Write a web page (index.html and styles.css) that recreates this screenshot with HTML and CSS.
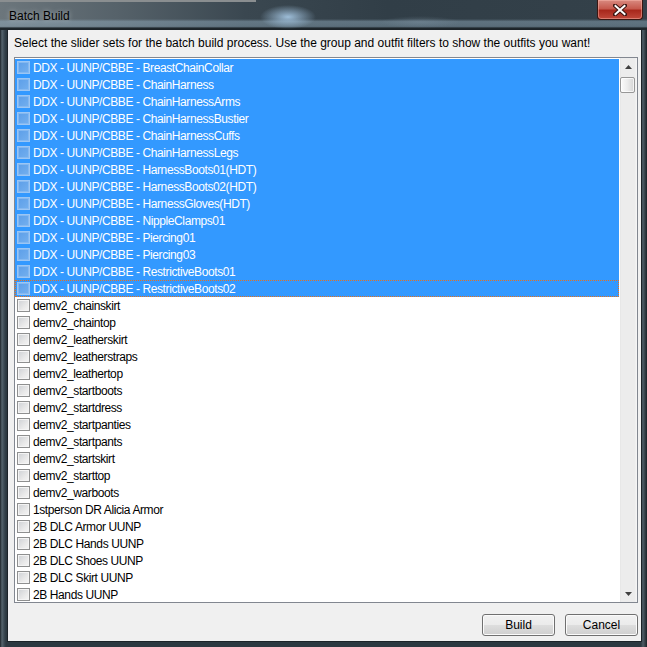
FILE: index.html
```html
<!DOCTYPE html>
<html lang="en">
<head>
    <meta charset="UTF-8">
    <title>Batch Build</title>
    <link rel="stylesheet" href="styles.css">
</head>
<body>

    <div class="window">

        <!-- Glass title bar -->
        <div class="titlebar">
            <span class="title">Batch Build</span>
            <div class="close">
                <svg width="14" height="12" viewBox="0 0 14 12">
                    <path d="M2 1.5 L12 10.5 M12 1.5 L2 10.5" stroke="#3a1410" stroke-width="4" stroke-linecap="square"/>
                    <path d="M2.5 2 L11.5 10 M11.5 2 L2.5 10" stroke="#ffffff" stroke-width="2" stroke-linecap="square"/>
                </svg>
            </div>
        </div>

        <div class="client">
            <div class="prompt">Select the slider sets for the batch build process. Use the group and outfit filters to show the outfits you want!</div>

            <!-- Outfit list -->
            <div class="list">
                <div class="items">
                    <div class="row sel"><span class="check"></span>DDX - UUNP/CBBE - BreastChainCollar</div>
                    <div class="row sel"><span class="check"></span>DDX - UUNP/CBBE - ChainHarness</div>
                    <div class="row sel"><span class="check"></span>DDX - UUNP/CBBE - ChainHarnessArms</div>
                    <div class="row sel"><span class="check"></span>DDX - UUNP/CBBE - ChainHarnessBustier</div>
                    <div class="row sel"><span class="check"></span>DDX - UUNP/CBBE - ChainHarnessCuffs</div>
                    <div class="row sel"><span class="check"></span>DDX - UUNP/CBBE - ChainHarnessLegs</div>
                    <div class="row sel"><span class="check"></span>DDX - UUNP/CBBE - HarnessBoots01(HDT)</div>
                    <div class="row sel"><span class="check"></span>DDX - UUNP/CBBE - HarnessBoots02(HDT)</div>
                    <div class="row sel"><span class="check"></span>DDX - UUNP/CBBE - HarnessGloves(HDT)</div>
                    <div class="row sel"><span class="check"></span>DDX - UUNP/CBBE - NippleClamps01</div>
                    <div class="row sel"><span class="check"></span>DDX - UUNP/CBBE - Piercing01</div>
                    <div class="row sel"><span class="check"></span>DDX - UUNP/CBBE - Piercing03</div>
                    <div class="row sel"><span class="check"></span>DDX - UUNP/CBBE - RestrictiveBoots01</div>
                    <div class="row sel focus"><span class="check"></span>DDX - UUNP/CBBE - RestrictiveBoots02</div>
                    <div class="row"><span class="check"></span>demv2_chainskirt</div>
                    <div class="row"><span class="check"></span>demv2_chaintop</div>
                    <div class="row"><span class="check"></span>demv2_leatherskirt</div>
                    <div class="row"><span class="check"></span>demv2_leatherstraps</div>
                    <div class="row"><span class="check"></span>demv2_leathertop</div>
                    <div class="row"><span class="check"></span>demv2_startboots</div>
                    <div class="row"><span class="check"></span>demv2_startdress</div>
                    <div class="row"><span class="check"></span>demv2_startpanties</div>
                    <div class="row"><span class="check"></span>demv2_startpants</div>
                    <div class="row"><span class="check"></span>demv2_startskirt</div>
                    <div class="row"><span class="check"></span>demv2_starttop</div>
                    <div class="row"><span class="check"></span>demv2_warboots</div>
                    <div class="row"><span class="check"></span>1stperson DR Alicia Armor</div>
                    <div class="row"><span class="check"></span>2B DLC Armor UUNP</div>
                    <div class="row"><span class="check"></span>2B DLC Hands UUNP</div>
                    <div class="row"><span class="check"></span>2B DLC Shoes UUNP</div>
                    <div class="row"><span class="check"></span>2B DLC Skirt UUNP</div>
                    <div class="row"><span class="check"></span>2B Hands UUNP</div>
                </div>

                <!-- Vertical scrollbar -->
                <div class="scroll">
                    <div class="arrow">
                        <svg width="7" height="4" viewBox="0 0 7 4"><path d="M3.5 0 L7 4 L0 4 Z" fill="#404040"/></svg>
                    </div>
                    <div class="thumb"></div>
                    <div class="track"></div>
                    <div class="arrow">
                        <svg width="7" height="4" viewBox="0 0 7 4"><path d="M0 0 L7 0 L3.5 4 Z" fill="#404040"/></svg>
                    </div>
                </div>
            </div>

            <div class="actions">
                <button class="btn">Build</button>
                <button class="btn">Cancel</button>
            </div>
        </div>

    </div>

</body>
</html>
```

FILE: styles.css
```css
body {
    margin: 0;
    background-color: #26323a;
    font-family: "Liberation Sans", Arial, sans-serif;
    font-size: 12px;
}

.window {
    width: 647px;
    height: 647px;
    display: flex;
    flex-direction: column;
    background:
        linear-gradient(90deg, #1c2328 0, #56646d 2px, #3d4b54 4px, #2c3840 6px, #2c3840 641px, #4f5d66 643px, #1c2328 647px);
    overflow: hidden;
}

/* Title bar (Aero glass) */
.titlebar {
    height: 30px;
    display: flex;
    justify-content: space-between;
    align-items: flex-start;
    background:
        linear-gradient(180deg, #8a8e90 0, #8a8e90 2px, transparent 2px) 0 0 / 256px 100% no-repeat,
        radial-gradient(ellipse 28px 12px at 288px 17px, rgba(175, 210, 240, 0.85), rgba(175, 210, 240, 0) 100%),
        radial-gradient(ellipse 40px 6px at 420px 22px, rgba(120, 140, 155, 0.45), rgba(120, 140, 155, 0) 100%),
        linear-gradient(180deg, transparent 0, transparent 63%, rgba(150, 178, 196, 0.45) 72%, rgba(150, 178, 196, 0.4) 88%, #1e262b 94%, #1e262b 100%),
        linear-gradient(90deg, #6c767c 0%, #56626a 18%, #3a4750 38%, #313e47 60%, #34414a 100%);
}

.title {
    padding: 9px 0 0 9px;
    line-height: 14px;
    color: #000;
    text-shadow: 0 0 5px rgba(255, 255, 255, 0.5);
}

.close {
    width: 46px;
    height: 20px;
    margin-right: 4px;
    box-sizing: border-box;
    border: 1px solid #3b1712;
    border-top: none;
    border-radius: 0 0 4px 4px;
    background: linear-gradient(180deg, #d98a80 0%, #c65a4e 45%, #a8281c 55%, #c0483a 100%);
    box-shadow: inset 0 0 0 1px rgba(255, 190, 180, 0.45);
    display: flex;
    justify-content: center;
    align-items: center;
}

/* Client area */
.client {
    flex: 1;
    margin: 0 6px 6px 8px;
    padding: 5px 3px 5px 6px;
    background-color: #f0f0f0;
    box-shadow: 0 0 0 1px #1c2328;
    display: flex;
    flex-direction: column;
}

.prompt {
    line-height: 16px;
    margin-bottom: 6px;
    color: #000;
    white-space: nowrap;
}

/* List box */
.list {
    height: 546px;
    box-sizing: border-box;
    border: 1px solid #828790;
    background-color: #fff;
    display: flex;
}

.items {
    width: 605px;
    padding-top: 1px;
    overflow: hidden;
}

.row {
    height: 17px;
    margin-right: 1px;
    padding-left: 2px;
    display: flex;
    align-items: center;
    gap: 3px;
    color: #000;
    letter-spacing: -0.4px;
    white-space: nowrap;
}

.row.sel {
    background-color: #3399ff;
    color: #fff;
}

.row.focus {
    outline: 1px dotted #e8701a;
    outline-offset: -1px;
}

.check {
    width: 13px;
    height: 13px;
    box-sizing: border-box;
    flex-shrink: 0;
    border: 1px solid #8e8f8f;
    background: linear-gradient(135deg, #cdd0d4 0%, #e9e9e9 60%, #f6f6f6 100%);
    box-shadow: inset 0 0 0 1px #f4f4f4;
}

.row.sel .check {
    border-color: #9cc6f4;
    background: linear-gradient(135deg, #5c9ee8 0%, #74b0ef 100%);
    box-shadow: inset 0 0 0 1px #84b8f0;
}

/* Scrollbar */
.scroll {
    width: 17px;
    display: flex;
    flex-direction: column;
    background: linear-gradient(90deg, #e2e2e2 0, #ececec 1px, #ececec 15px, #f4f4f4 16px);
}

.arrow {
    height: 17px;
    display: flex;
    justify-content: center;
    align-items: center;
}

.thumb {
    width: 15px;
    height: 16px;
    margin-top: 2px;
    box-sizing: border-box;
    border: 1px solid #979797;
    border-radius: 2px;
    background: linear-gradient(90deg, #fbfbfb 0%, #ececec 50%, #d4d4d4 100%);
    box-shadow: inset 0 0 0 1px rgba(255, 255, 255, 0.7);
}

.track {
    flex: 1;
}

/* Dialog buttons */
.actions {
    margin-top: 11px;
    display: flex;
    justify-content: flex-end;
    gap: 10px;
}

.btn {
    width: 73px;
    height: 22px;
    padding: 0;
    border: 1px solid #707070;
    border-radius: 3px;
    background: linear-gradient(180deg, #f2f2f2 0%, #ebebeb 48%, #dddddd 52%, #cfcfcf 100%);
    box-shadow: inset 0 0 0 1px #fbfbfb;
    font-family: "Liberation Sans", Arial, sans-serif;
    font-size: 12px;
    color: #000;
}
```
